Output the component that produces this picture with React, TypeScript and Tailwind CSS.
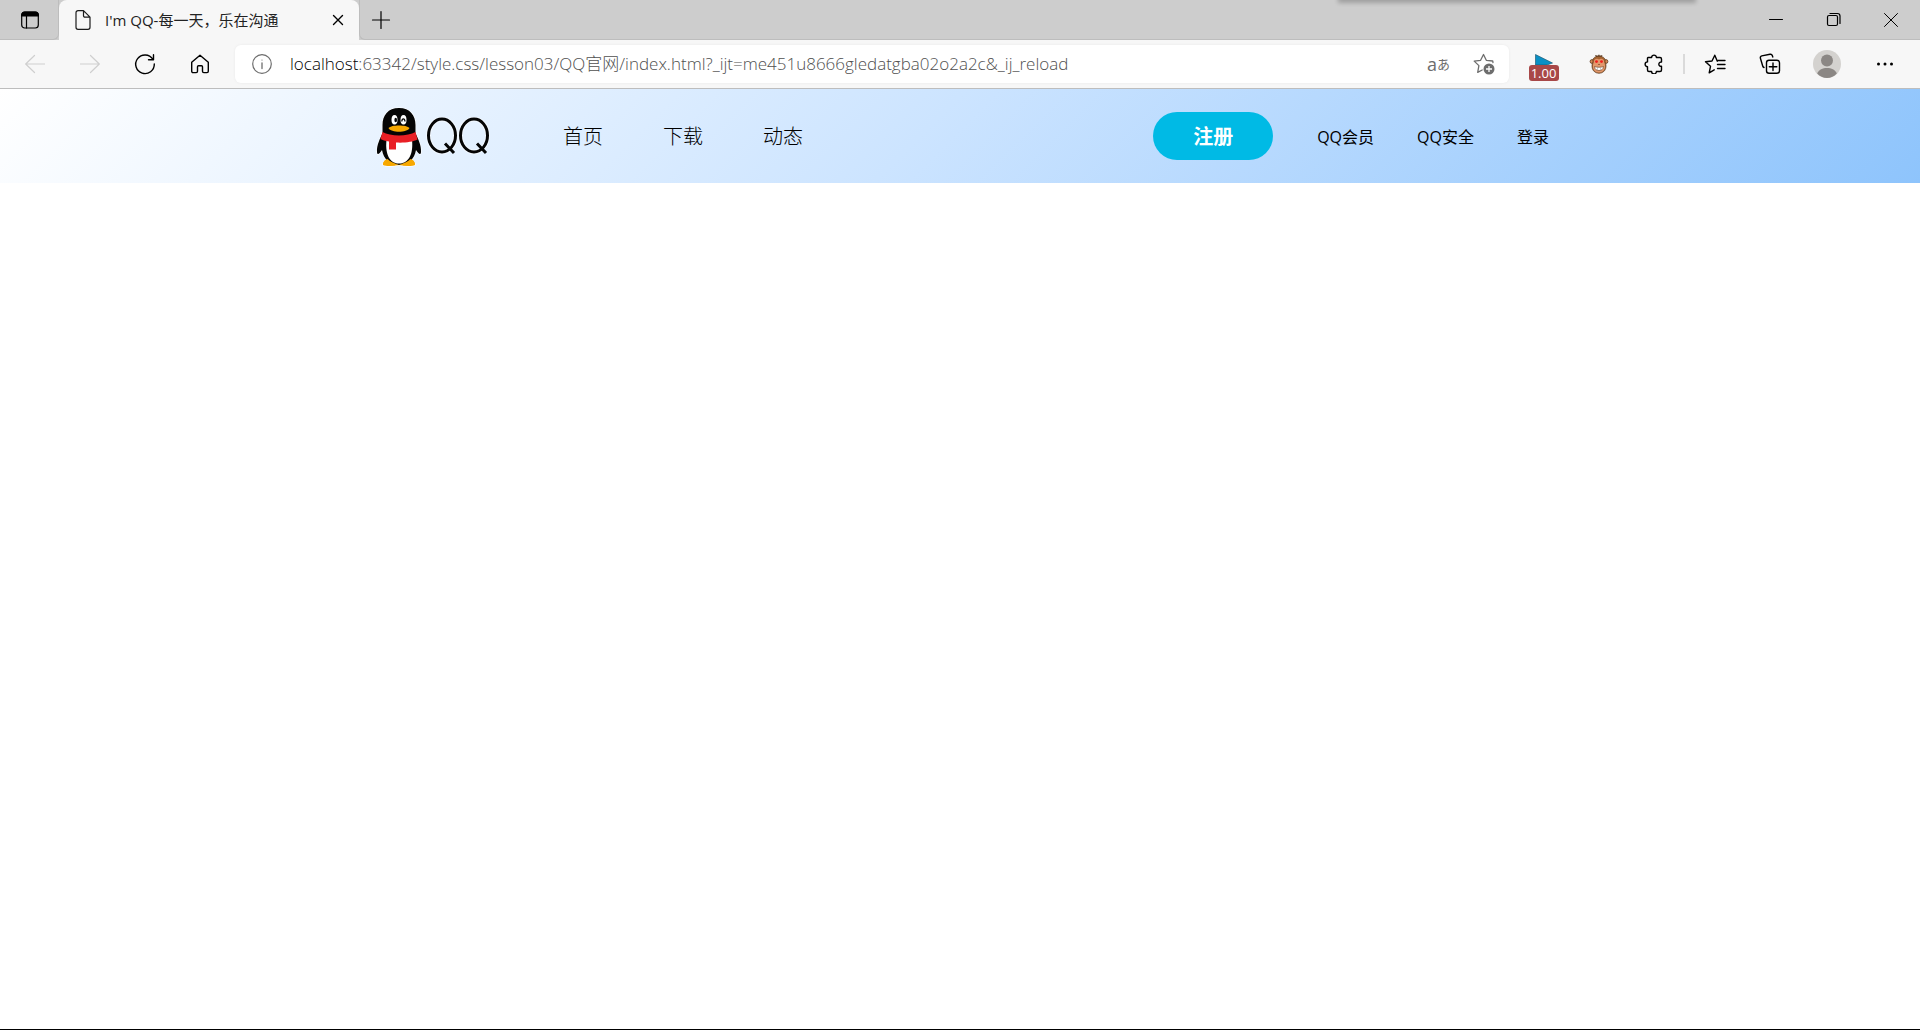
import React from "react";

const ui = "font-['Open_Sans','Noto_Sans_CJK_SC',sans-serif]";

function Glyph({ children, className = "size-5" }: { children: React.ReactNode; className?: string }) {
  return (
    <svg viewBox="0 0 20 20" fill="none" stroke="currentColor" strokeWidth="1.2" strokeLinecap="round" strokeLinejoin="round" className={className} aria-hidden="true">
      {children}
    </svg>
  );
}

function ToolButton({ label, children, className = "w-[55px]" }: { label: string; children: React.ReactNode; className?: string }) {
  return (
    <button type="button" aria-label={label} className={`flex h-10 shrink-0 items-center justify-center ${className}`}>
      {children}
    </button>
  );
}

function TabStrip() {
  return (
    <div className="relative flex h-10 items-stretch bg-[#cdcdcd]">
      <div className="absolute -top-1 right-[226px] h-1 w-[354px] shadow-[0_1px_4px_2px_rgba(0,0,0,0.22)]" />
      <button type="button" aria-label="Tab actions" className="flex w-[59px] items-center justify-center rounded-br-md border-r border-b border-[#bdbdbd] pl-0.5 text-black">
        <Glyph>
          <rect x="1.7" y="2" width="16.6" height="16" rx="3" />
          <path d="M1.7 6V5a3 3 0 0 1 3-3h10.600a3 3 0 0 1 3 3v1z" fill="currentColor" />
          <path d="M6.500 6v12" />
        </Glyph>
      </button>
      <div className="flex w-[300px] items-center rounded-t-lg bg-[#f7f7f7] pr-[11px] pl-[14px]">
        <Glyph className="h-5 w-5">
          <path d="M10.500 0.700H5a2 2 0 0 0-2 2v14.600a2 2 0 0 0 2 2h10a2 2 0 0 0 2-2V7.200zM10.500 0.700V5.700a1.500 1.500 0 0 0 1.500 1.500h5" />
        </Glyph>
        <span className="ml-3 flex-1 text-[15px] leading-5 whitespace-nowrap text-[#222]">I'm QQ-每一天，乐在沟通</span>
        <button type="button" aria-label="Close tab" className="flex size-5 items-center justify-center text-black">
          <Glyph>
            <path d="M5.500 5.500l9 9M14.500 5.500l-9 9" strokeWidth="1.400" />
          </Glyph>
        </button>
      </div>
      <div className="flex flex-1 items-center rounded-bl-md border-b border-l border-[#bdbdbd]">
        <button type="button" aria-label="New tab" className="flex w-[42px] items-center justify-center text-black">
          <Glyph>
            <path d="M10 1.500v17M1.500 10h17" />
          </Glyph>
        </button>
        <div className="ml-auto flex">
          <ToolButton label="Minimize" className="w-[58px] text-black">
            <Glyph><path d="M3.500 9.500h13" strokeWidth="1" /></Glyph>
          </ToolButton>
          <ToolButton label="Restore" className="w-[57px] text-black">
            <Glyph>
              <rect x="3.500" y="5.500" width="10" height="10" rx="1.500" />
              <path d="M6 3.500h7.500a2.500 2.500 0 0 1 2.500 2.500v7.500" />
            </Glyph>
          </ToolButton>
          <ToolButton label="Close" className="w-[58px] text-black">
            <Glyph><path d="M3.500 3.500l13 13M16.500 3.500l-13 13" strokeWidth="1" /></Glyph>
          </ToolButton>
        </div>
      </div>
    </div>
  );
}

function Monkey() {
  return (
    <svg viewBox="0 0 20 20" className="size-5" aria-hidden="true">
      <path d="M7 3L6 1l3 .8L10 .3l.8 1.400L13.500 1l-1 2z" fill="#5b3a1f" />
      <circle cx="3" cy="7.500" r="1.900" fill="#d98a55" stroke="#5b3a1f" strokeWidth=".8" />
      <circle cx="17" cy="7.500" r="1.900" fill="#d98a55" stroke="#5b3a1f" strokeWidth=".8" />
      <path d="M4 8C3 3.500 7 2.200 10 2.200s7 1.300 6 5.800c2 3 1.500 11-6 11.300C2.500 19 2 11 4 8z" fill="#a4622f" stroke="#5b3a1f" strokeWidth=".7" />
      <path d="M4.800 8.500C4.500 5 8 4 10 5.500c2-1.500 5.500-.5 5.200 3 2 4 .8 9.800-5.200 10-6-.2-7.200-6-5.200-10z" fill="#e2986c" />
      <circle cx="7.500" cy="7.600" r="1.400" fill="#f01c1c" />
      <circle cx="12.500" cy="7.600" r="1.400" fill="#f01c1c" />
      <path d="M9 10.500h2" stroke="#7a4a2a" strokeWidth=".7" />
      <path d="M5.500 12.500c2.500 1 6.500 1 9 0-.3 3-2 4-4.500 4s-4.200-1-4.500-4z" fill="#fff" stroke="#7a4a2a" strokeWidth=".7" />
      <path d="M8.500 13v3M11.500 13v3" stroke="#999" strokeWidth=".5" />
    </svg>
  );
}

function Toolbar() {
  return (
    <div className="flex h-12 items-center bg-[#f7f7f7] pl-[7px] text-black">
      <ToolButton label="Back" className="w-[55px] text-[#cfcfcf]">
        <Glyph><path d="M19.500 10H.7M9.500 1.500L.7 10l8.800 8.500" /></Glyph>
      </ToolButton>
      <ToolButton label="Forward" className="w-[55px] text-[#cfcfcf]">
        <Glyph><path d="M.5 10h18.800M10.500 1.500l8.800 8.500-8.800 8.500" /></Glyph>
      </ToolButton>
      <ToolButton label="Refresh">
        <Glyph className="size-5 overflow-visible"><path d="M17.800 5.200A9.300 9.300 0 1 0 19.300 10M18.500.8v5h-5" strokeWidth="1.400" /></Glyph>
      </ToolButton>
      <ToolButton label="Home">
        <Glyph><path d="M1.700 8.300L10 1.200l8.300 7.100v9a1.300 1.300 0 0 1-1.300 1.300h-3.200a1.300 1.300 0 0 1-1.300-1.300v-4.500a1 1 0 0 0-1-1h-3a1 1 0 0 0-1 1v4.500a1.300 1.300 0 0 1-1.300 1.300H3a1.300 1.300 0 0 1-1.300-1.300z" strokeWidth="1.400" /></Glyph>
      </ToolButton>
      <div className="ml-2 flex h-[38px] flex-1 items-center rounded-md bg-white pr-[14px] pl-[17px] text-[#6d6d6d] shadow-[0_0_3px_rgba(0,0,0,0.06)]">
        <Glyph>
          <circle cx="10" cy="10" r="9.300" />
          <path d="M10 9v5.500" strokeWidth="1.300" />
          <circle cx="10" cy="6" r=".6" fill="currentColor" stroke="none" />
        </Glyph>
        <p className="ml-[18px] flex-1 text-[17px] leading-6 font-light whitespace-nowrap text-[#505050]">
          <span className="text-black">localhost</span>:63342/style.css/lesson03/QQ官网/index.html?_ijt=me451u8666gledatgba02o2a2c&amp;_ij_reload
        </p>
        <button type="button" aria-label="Translate" className="flex items-center">
          <span className="text-lg leading-5">a</span>
          <span className="text-[13px] leading-5">あ</span>
        </button>
        <button type="button" aria-label="Add to favorites" className="ml-[23px]">
          <svg viewBox="0 0 22 22" className="size-[22px]" fill="none" stroke="currentColor" strokeWidth="1.300" strokeLinejoin="round" aria-hidden="true">
            <path d="M20 9.500l-.3-1.500-6.400-.7L10.500 1.500 7.600 7.300l-6.400.8 4.700 4.500-1.200 6.700 4.500-2.300" strokeLinecap="round" />
            <circle cx="16" cy="16" r="5.500" fill="currentColor" stroke="none" />
            <path d="M16 13v6M13 16h6" stroke="#fff" />
          </svg>
        </button>
      </div>
      <ToolButton label="Playback speed" className="ml-[7px] w-[55px]">
        <span className="flex flex-col items-center">
          <svg viewBox="0 0 18 11" className="mt-[7px] h-[11px] w-[18px]" aria-hidden="true"><path d="M.5.5L17.500 9 12 11H.5z" fill="#0a8fc4" stroke="#164d66" strokeWidth=".6" /></svg>
          <span className="w-[30px] rounded-[3px] bg-[#a84848] text-center text-[13px] leading-4 text-white">1.00</span>
        </span>
      </ToolButton>
      <ToolButton label="Monkey"><Monkey /></ToolButton>
      <ToolButton label="Extensions">
        <Glyph>
          <path d="M4 3.500h3.600a2.400 2.400 0 0 1 4.800 0H16a1.500 1.500 0 0 1 1.500 1.500v3a2.200 2.200 0 1 0 0 4.300V16a1.500 1.500 0 0 1-1.500 1.500h-3.600a2.400 2.400 0 0 1-4.800 0H5A1.500 1.500 0 0 1 3.500 16v-3.300a2.400 2.400 0 0 1 0-4.800V4z" strokeWidth="1.400" />
        </Glyph>
      </ToolButton>
      <span className="mx-0.5 h-5 w-0.5 bg-[#dadada]" />
      <ToolButton label="Favorites">
        <Glyph className="size-5 overflow-visible">
          <path d="M12.300 7.200L9.800 1.200 7 7 .5 7.700l5 4.600-1.300 6.500 5-3M13 6.500h7M12.500 10.500h7.500M12.500 14.500h7.500" strokeWidth="1.400" />
        </Glyph>
      </ToolButton>
      <ToolButton label="Collections">
        <Glyph className="size-5 overflow-visible">
          <path d="M4 13.500a2 2 0 0 1-1.300-1.500L.4 4.300a2 2 0 0 1 1.400-2.400L10 .3a2 2 0 0 1 2.300 1.300l.5 1.400" strokeWidth="1.400" />
          <rect x="6.500" y="6.300" width="13" height="13" rx="2.500" strokeWidth="1.400" />
          <path d="M13 9v7.500M9.300 12.800h7.500" strokeWidth="1.400" />
        </Glyph>
      </ToolButton>
      <ToolButton label="Profile" className="w-[60px]">
        <svg viewBox="0 0 28 28" className="size-7" aria-hidden="true">
          <circle cx="14" cy="14" r="14" fill="#d4d2cf" />
          <circle cx="14" cy="10.500" r="6" fill="#8b8784" />
          <path d="M4.200 23.500C6 19.500 9.500 18 14 18s8 1.500 9.800 5.500A14 14 0 0 1 14 28a14 14 0 0 1-9.800-4.500z" fill="#8b8784" />
        </svg>
      </ToolButton>
      <ToolButton label="Settings and more" className="mr-2 w-[55px]">
        <Glyph>
          <g fill="currentColor" stroke="none">
            <circle cx="3.500" cy="10" r="1.500" />
            <circle cx="10" cy="10" r="1.500" />
            <circle cx="16.500" cy="10" r="1.500" />
          </g>
        </Glyph>
      </ToolButton>
    </div>
  );
}

function Penguin() {
  return (
    <svg viewBox="0 0 46 60" className="h-[60px] w-[46px]" aria-hidden="true">
      <path d="M7 58c-.5-4 4-6 10-6h12c6 0 10.500 2 10 6-3 1.500-10 1.200-16 .2C17 59.200 10 59.500 7 58z" fill="#f7a800" stroke="#fff" strokeWidth="1.200" paintOrder="stroke" />
      <path d="M23 1C12 1 6.500 8.500 6.500 18v8C4 32 .5 38 1 45c.3 3.500 2 2.500 5-2 1.500 9 8 15 17 15s15.500-6 17-15c3 4.500 4.700 5.500 5 2 .5-7-3-13-5.500-19v-8C39.500 8.500 34 1 23 1z" fill="#050505" stroke="#fff" strokeWidth="1.200" paintOrder="stroke" />
      <path d="M7 57.500c0-3 2-5 4.500-5.500 3 3 7 4.800 11.500 5.200-5 1.300-12 1.800-16 .3zM39 57.500c0-3-2-5-4.500-5.500-3 3-7 4.800-11.500 5.200 5 1.300 12 1.800 16 .3z" fill="#f7a800" />
      <path d="M10.500 33h25.500c1.500 13-3 23.500-13 23.500S9 46 10.500 33z" fill="#fff" />
      <ellipse cx="18.500" cy="12.800" rx="3" ry="4.800" fill="#fff" />
      <ellipse cx="27.500" cy="12.800" rx="3" ry="4.800" fill="#fff" />
      <ellipse cx="19.700" cy="13" rx="1.300" ry="2.300" fill="#050505" />
      <path d="M25.800 14.500c.3-3.500 2.800-3.500 3.200 0" fill="none" stroke="#050505" strokeWidth="1.300" />
      <path d="M12.500 21c3-3.300 18-3.300 21 0-2.500 5-18.500 5-21 0z" fill="#f7a800" />
      <path d="M6.500 25c8 4.500 25 4.500 33 0l2 7.500C37 35 28 36 20 35.500V42.500h-7V34.500c-4-.5-6.500-1.200-8.500-2.500z" fill="#e91f25" />
    </svg>
  );
}

function Logo() {
  return (
    <a href="#home" aria-label="QQ" className="flex items-center pt-0.5">
      <Penguin />
      <svg viewBox="0 0 64 40" className="ml-1 h-10 w-16" fill="none" aria-hidden="true">
        <g stroke="#fff" strokeOpacity=".5" strokeWidth="5">
          <ellipse cx="16" cy="18.500" rx="13.500" ry="16.500" />
          <ellipse cx="48" cy="18.500" rx="13.500" ry="16.500" />
        </g>
        <g stroke="#050505" strokeWidth="3">
          <ellipse cx="16" cy="18.500" rx="13.500" ry="16.500" />
          <ellipse cx="48" cy="18.500" rx="13.500" ry="16.500" />
          <path d="M19 26.500l9 9.500M51 26.500l9 9.500" />
        </g>
      </svg>
    </a>
  );
}

const mainLinks = ["首页", "下载", "动态"];
const sideLinks = ["QQ会员", "QQ安全", "登录"];

function SiteHeader() {
  return (
    <header className="bg-[linear-gradient(135deg,#fff_0%,#cce4ff_48%,#8ec4fc_100%)] text-black">
      <div className="mx-auto flex h-[94px] w-full max-w-[1200px] items-center pr-[11px] pl-4">
        <Logo />
        <nav className="ml-[73px] flex gap-[60px] pt-0.5 text-xl leading-7 font-light">
          {mainLinks.map((t) => (
            <a key={t} href="#nav">{t}</a>
          ))}
        </nav>
        <div className="ml-auto flex items-center">
          <button type="button" className="mr-11 h-12 w-[120px] rounded-full bg-[#00bae5] pt-0.5 text-xl font-bold text-white">注册</button>
          <nav className="flex gap-[43px] pt-0.5 text-base">
            {sideLinks.map((t) => (
              <a key={t} href="#account">{t}</a>
            ))}
          </nav>
        </div>
      </div>
    </header>
  );
}

export default function App() {
  return (
    <div className={`flex min-h-screen flex-col border-b border-black bg-white text-[#1b1b1b] ${ui}`}>
      <TabStrip />
      <Toolbar />
      <div className="h-px bg-[#bdbdbd]" />
      <main>
        <SiteHeader />
      </main>
    </div>
  );
}
